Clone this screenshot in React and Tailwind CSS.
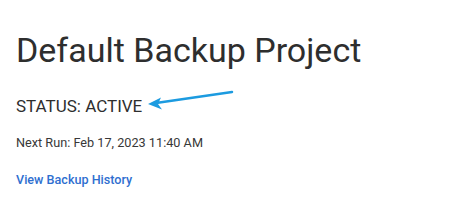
import React from 'react';

const App = () => {
  return (
    <div className="relative w-[474px] h-[205px] bg-white overflow-hidden" style={{ fontFamily: 'Roboto, "Liberation Sans", sans-serif' }}>
      <div className="flex flex-col pl-[16px] pt-[30px]">
        <h1 className="text-[34px] leading-[40px] text-[#2e2e2e] font-normal">Default Backup Project</h1>
        <p className="mt-[26px] text-[17px] leading-[20px] text-[#2e2e2e] uppercase">Status: Active</p>
        <p className="mt-[19px] text-[12.7px] leading-[16px] text-[#383838]">Next Run: Feb 17, 2023 11:40 AM</p>
        <a href="#" className="mt-[21px] text-[12.6px] leading-[16px] font-medium text-[#2f6fd0]">View Backup History</a>
      </div>

      {/* callout arrow */}
      <svg className="absolute left-[140px] top-[85px]" width="100" height="25" viewBox="0 0 100 25">
        <path d="M92 7 L16 18" stroke="#1c9be0" strokeWidth="2.5" strokeLinecap="round" fill="none" />
        <path d="M8 19 L21 12.5 L18 19 L22 24.5 Z" fill="#1c9be0" />
      </svg>
    </div>
  );
};

export default App;
